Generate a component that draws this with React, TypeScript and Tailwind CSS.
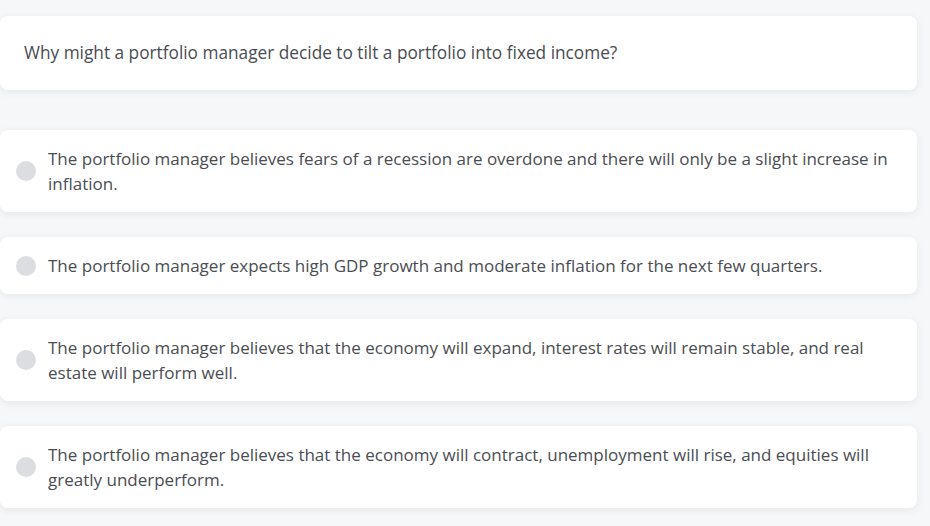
const options = [
  "The portfolio manager believes fears of a recession are overdone and there will only be a slight increase in inflation.",
  "The portfolio manager expects high GDP growth and moderate inflation for the next few quarters.",
  "The portfolio manager believes that the economy will expand, interest rates will remain stable, and real estate will perform well.",
  "The portfolio manager believes that the economy will contract, unemployment will rise, and equities will greatly underperform.",
]

export default function App() {
  return (
    <div
      className="min-h-screen bg-[#f6f7f9] pt-4 pr-[13px] text-[#4a4d52]"
      style={{ fontFamily: '"Open Sans", "Noto Sans", sans-serif' }}
    >
      <div className="rounded-lg bg-white px-6 py-6 text-[17.25px] leading-[26px] shadow-[0_2px_8px_rgba(0,0,0,0.07)]">
        Why might a portfolio manager decide to tilt a portfolio into fixed income?
      </div>

      <div className="mt-10 flex flex-col gap-[25px]">
        {options.map((text, i) => (
          <div
            key={i}
            className="flex items-center gap-3 rounded-lg bg-white py-4 pl-4 pr-4 shadow-[0_2px_8px_rgba(0,0,0,0.07)]"
          >
            <span className="h-5 w-5 shrink-0 rounded-full bg-[#dcdde0]" />
            <p className="text-[17px] leading-[25px]">{text}</p>
          </div>
        ))}
      </div>
    </div>
  )
}
